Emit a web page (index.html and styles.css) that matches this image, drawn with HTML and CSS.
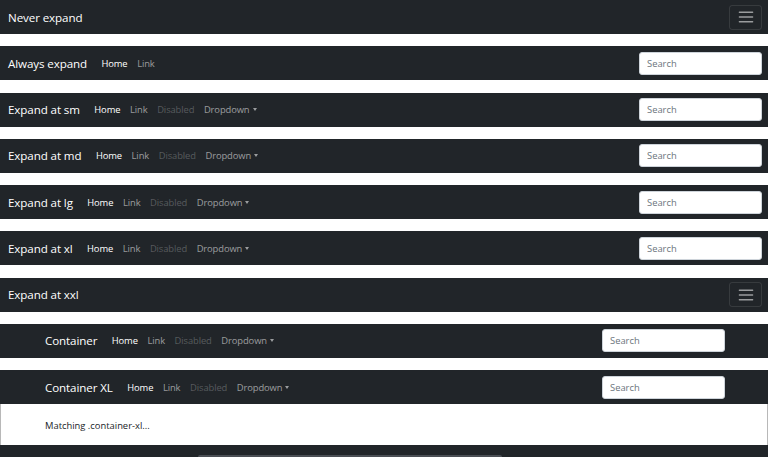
FILE: index.html
```html
<!DOCTYPE html>
<html lang="en">
<head>
<meta charset="utf-8">
<title>Navbars</title>
<link rel="stylesheet" href="styles.css">
</head>
<body>
<main class="page">
  <nav class="navbar">
    <div class="fluid">
      <span class="brand">Never expand</span>
      <button class="toggler" type="button" aria-label="Toggle navigation">
        <svg class="toggler-icon" viewBox="0 0 30 30" width="18" height="18"><path d="M4 7h22M4 15h22M4 23h22" stroke="rgba(255,255,255,0.55)" stroke-width="2.4" stroke-linecap="round"/></svg>
      </button>
    </div>
  </nav>

  <nav class="navbar">
    <div class="fluid">
      <span class="brand">Always expand</span>
      <ul class="nav">
        <li><a class="link active">Home</a></li>
        <li><a class="link">Link</a></li>
      </ul>
      <form class="search"><input class="input" type="search" placeholder="Search"></form>
    </div>
  </nav>

  <nav class="navbar">
    <div class="fluid">
      <span class="brand">Expand at sm</span>
      <ul class="nav">
        <li><a class="link active">Home</a></li>
        <li><a class="link">Link</a></li>
        <li><a class="link disabled">Disabled</a></li>
        <li><a class="link dropdown">Dropdown</a></li>
      </ul>
      <form class="search"><input class="input" type="search" placeholder="Search"></form>
    </div>
  </nav>

  <nav class="navbar">
    <div class="fluid">
      <span class="brand">Expand at md</span>
      <ul class="nav">
        <li><a class="link active">Home</a></li>
        <li><a class="link">Link</a></li>
        <li><a class="link disabled">Disabled</a></li>
        <li><a class="link dropdown">Dropdown</a></li>
      </ul>
      <form class="search"><input class="input" type="search" placeholder="Search"></form>
    </div>
  </nav>

  <nav class="navbar">
    <div class="fluid">
      <span class="brand">Expand at lg</span>
      <ul class="nav">
        <li><a class="link active">Home</a></li>
        <li><a class="link">Link</a></li>
        <li><a class="link disabled">Disabled</a></li>
        <li><a class="link dropdown">Dropdown</a></li>
      </ul>
      <form class="search"><input class="input" type="search" placeholder="Search"></form>
    </div>
  </nav>

  <nav class="navbar">
    <div class="fluid">
      <span class="brand">Expand at xl</span>
      <ul class="nav">
        <li><a class="link active">Home</a></li>
        <li><a class="link">Link</a></li>
        <li><a class="link disabled">Disabled</a></li>
        <li><a class="link dropdown">Dropdown</a></li>
      </ul>
      <form class="search"><input class="input" type="search" placeholder="Search"></form>
    </div>
  </nav>

  <nav class="navbar">
    <div class="fluid">
      <span class="brand">Expand at xxl</span>
      <button class="toggler" type="button" aria-label="Toggle navigation">
        <svg class="toggler-icon" viewBox="0 0 30 30" width="18" height="18"><path d="M4 7h22M4 15h22M4 23h22" stroke="rgba(255,255,255,0.55)" stroke-width="2.4" stroke-linecap="round"/></svg>
      </button>
    </div>
  </nav>

  <nav class="navbar">
    <div class="container">
      <span class="brand">Container</span>
      <ul class="nav">
        <li><a class="link active">Home</a></li>
        <li><a class="link">Link</a></li>
        <li><a class="link disabled">Disabled</a></li>
        <li><a class="link dropdown">Dropdown</a></li>
      </ul>
      <form class="search"><input class="input" type="search" placeholder="Search"></form>
    </div>
  </nav>

  <nav class="navbar last">
    <div class="container">
      <span class="brand">Container XL</span>
      <ul class="nav">
        <li><a class="link active">Home</a></li>
        <li><a class="link">Link</a></li>
        <li><a class="link disabled">Disabled</a></li>
        <li><a class="link dropdown">Dropdown</a></li>
      </ul>
      <form class="search"><input class="input" type="search" placeholder="Search"></form>
    </div>
  </nav>

  <section class="content">
    <div class="container">
      <p class="note">Matching .container-xl...</p>
    </div>
  </section>

  <nav class="navbar bottom">
    <div class="center-bar"></div>
  </nav>
</main>
</body>
</html>
```

FILE: styles.css
```css
* { box-sizing: border-box; }

html, body {
  margin: 0;
  padding: 0;
  background: #fff;
  overflow: hidden;
}

body {
  font-family: "Open Sans", "Noto Sans", "Liberation Sans", sans-serif;
  color: #212529;
  width: 768px;
  height: 457px;
}

.page {
  display: flex;
  flex-direction: column;
}

.navbar {
  background: #212529;
  height: 34px;
  margin-bottom: 12.25px;
  flex-shrink: 0;
  display: flex;
  align-items: center;
}

.navbar.last { margin-bottom: 0; }

.fluid,
.container {
  display: flex;
  align-items: center;
  width: 100%;
  padding: 0 6px 0 8px;
}

.container {
  width: 682px;
  margin: 0 auto;
  padding: 0 0 0 2px;
}

.brand {
  color: #fff;
  font-size: 11.6px;
  line-height: 1;
  margin-right: 9.6px;
  padding-top: 1px;
  white-space: nowrap;
  letter-spacing: -0.1px;
}

.nav {
  list-style: none;
  margin: 0;
  padding: 0;
  display: flex;
  align-items: center;
}

.link {
  display: block;
  padding: 0 4.8px;
  font-size: 9.4px;
  color: rgba(255, 255, 255, 0.55);
  white-space: nowrap;
  letter-spacing: -0.1px;
}

.link.active { color: #fff; }
.link.disabled { color: rgba(255, 255, 255, 0.25); }

.link.dropdown::after {
  content: "";
  display: inline-block;
  margin-left: 3px;
  vertical-align: 2px;
  border-top: 3px solid rgba(255, 255, 255, 0.55);
  border-left: 2.5px solid transparent;
  border-right: 2.5px solid transparent;
}

.search {
  margin: 0 0 0 auto;
  display: flex;
}

.input {
  width: 123px;
  height: 23px;
  border: 1px solid #ced4da;
  border-radius: 3px;
  background: #fff;
  padding: 0 7px;
  font-family: inherit;
  font-size: 9.4px;
  color: #212529;
  outline: none;
}

.input::placeholder { color: #6c757d; }

.toggler {
  margin-left: auto;
  width: 33px;
  height: 25px;
  background: transparent;
  border: 1px solid rgba(255, 255, 255, 0.1);
  border-radius: 3px;
  padding: 0;
  display: flex;
  align-items: center;
  justify-content: center;
}

.content {
  height: 41px;
  background: #fff;
  border-left: 1px solid #b8b8b8;
  border-right: 1px solid #b8b8b8;
  display: flex;
  align-items: center;
}

.note {
  margin: 0;
  font-size: 9.4px;
  color: #212529;
  padding-top: 2px;
}

.bottom {
  height: 12px;
  margin: 0;
  align-items: flex-end;
  justify-content: flex-start;
}

.center-bar {
  margin-left: 198px;
  width: 304px;
  height: 2px;
  background: #4a4e54;
  border-radius: 2px 2px 0 0;
}
```
